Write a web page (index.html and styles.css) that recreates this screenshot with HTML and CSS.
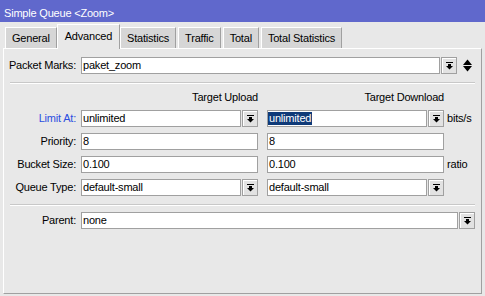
FILE: index.html
```html
<!DOCTYPE html>
<html>
<head>
<meta charset="utf-8">
<title>Simple Queue &lt;Zoom&gt;</title>
<link rel="stylesheet" href="styles.css">
</head>
<body>
<div class="window">
  <div class="titlebar">Simple Queue &lt;Zoom&gt;</div>
  <div class="tabs">
    <div class="tab">General</div>
    <div class="tab active">Advanced</div>
    <div class="tab">Statistics</div>
    <div class="tab">Traffic</div>
    <div class="tab">Total</div>
    <div class="tab">Total Statistics</div>
  </div>
  <div class="panel">
    <div class="row">
      <div class="lbl">Packet Marks:</div>
      <div class="combo combo-marks">
        <div class="field">paket_zoom</div>
        <div class="btn"><svg width="7" height="8" viewBox="0 0 7 8"><rect x="0" y="0" width="7" height="1"/><rect x="2" y="2" width="3" height="2"/><path d="M0 4h7L3.5 7.6z"/></svg></div>
      </div>
      <div class="updown"><svg width="9" height="13" viewBox="0 0 9 13"><path d="M4.5 0.5L9 6H0z"/><path d="M0 7h9L4.5 12.5z"/></svg></div>
    </div>
    <div class="sep"></div>
    <div class="grid">
      <div></div>
      <div class="colhead">Target Upload</div>
      <div class="colhead">Target Download</div>
      <div></div>

      <div class="lbl blue">Limit At:</div>
      <div class="combo">
        <div class="field">unlimited</div>
        <div class="btn"><svg width="7" height="8" viewBox="0 0 7 8"><rect x="0" y="0" width="7" height="1"/><rect x="2" y="2" width="3" height="2"/><path d="M0 4h7L3.5 7.6z"/></svg></div>
      </div>
      <div class="combo">
        <div class="field"><span class="sel">unlimited</span></div>
        <div class="btn"><svg width="7" height="8" viewBox="0 0 7 8"><rect x="0" y="0" width="7" height="1"/><rect x="2" y="2" width="3" height="2"/><path d="M0 4h7L3.5 7.6z"/></svg></div>
      </div>
      <div class="unit">bits/s</div>

      <div class="lbl">Priority:</div>
      <div class="field single">8</div>
      <div class="field single">8</div>
      <div></div>

      <div class="lbl">Bucket Size:</div>
      <div class="field single">0.100</div>
      <div class="field single">0.100</div>
      <div class="unit">ratio</div>

      <div class="lbl">Queue Type:</div>
      <div class="combo">
        <div class="field">default-small</div>
        <div class="btn"><svg width="7" height="8" viewBox="0 0 7 8"><rect x="0" y="0" width="7" height="1"/><rect x="2" y="2" width="3" height="2"/><path d="M0 4h7L3.5 7.6z"/></svg></div>
      </div>
      <div class="combo">
        <div class="field">default-small</div>
        <div class="btn"><svg width="7" height="8" viewBox="0 0 7 8"><rect x="0" y="0" width="7" height="1"/><rect x="2" y="2" width="3" height="2"/><path d="M0 4h7L3.5 7.6z"/></svg></div>
      </div>
      <div></div>
    </div>
    <div class="sep"></div>
    <div class="row row-parent">
      <div class="lbl">Parent:</div>
      <div class="combo combo-parent">
        <div class="field">none</div>
        <div class="btn"><svg width="7" height="8" viewBox="0 0 7 8"><rect x="0" y="0" width="7" height="1"/><rect x="2" y="2" width="3" height="2"/><path d="M0 4h7L3.5 7.6z"/></svg></div>
      </div>
    </div>
  </div>
</div>
</body>
</html>
```

FILE: styles.css
```css
* { box-sizing: border-box; }
html, body { margin: 0; padding: 0; }
body {
  width: 485px;
  height: 296px;
  overflow: hidden;
  background: #e8e8e8;
  font-family: "Liberation Sans", Arial, sans-serif;
  font-size: 11px;
  letter-spacing: -0.2px;
  color: #000;
}
.window { width: 485px; height: 296px; }

.titlebar {
  height: 22px;
  background: #6068cc;
  color: #fff;
  padding: 7px 0 0 4px;
  line-height: 13px;
  white-space: nowrap;
}

.tabs {
  display: flex;
  align-items: flex-end;
  height: 26px;
  padding-left: 5px;
  position: relative;
  z-index: 1;
}
.tab {
  height: 21px;
  padding: 4px 6px 0;
  line-height: 13px;
  white-space: nowrap;
  background: #d6d6d6;
  border-top: 1px solid #fff;
  border-left: 1px solid #fff;
  border-right: 1px solid #a0a0a0;
  margin-right: 2px;
}
.tab.active {
  height: 25px;
  margin-bottom: -1px;
  margin-left: -2px;
  margin-right: 0;
  padding: 5px 7px 0;
  background: #e8e8e8;
}

.panel {
  margin-left: 3px;
  width: 479px;
  height: 246px;
  border: 1px solid;
  border-color: #fff #a0a0a0 #a0a0a0 #fff;
  padding-top: 8px;
}

.row {
  display: flex;
  align-items: center;
  height: 17px;
}
.lbl {
  flex: none;
  width: 77px;
  padding-right: 5px;
  text-align: right;
  white-space: nowrap;
  line-height: 13px;
}
.lbl.blue { color: #2a4ee0; }

.combo {
  display: flex;
  width: 177px;
  height: 17px;
}
.combo-marks { width: 376px; }
.combo-parent { width: 394px; }

.field {
  flex: 1;
  height: 17px;
  background: #fff;
  border: 1px solid #a0a0a0;
  padding-left: 1px;
  line-height: 15px;
  white-space: nowrap;
  overflow: hidden;
}
.field.single { flex: none; width: 177px; }

.sel {
  display: inline-block;
  vertical-align: top;
  margin: 1px 0 0 -1px;
  padding: 0 1px;
  line-height: 13px;
  background: #0f3a78;
  color: #fff;
}

.btn {
  flex: none;
  width: 16px;
  height: 17px;
  margin-left: 1px;
  border: 1px solid #a0a0a0;
  background: #e2e2e2;
  box-shadow: inset 1px 1px #fff;
  display: flex;
  align-items: center;
  justify-content: center;
}
.btn svg, .updown svg { display: block; fill: #000; }

.updown {
  margin-left: 6px;
  width: 9px;
  height: 13px;
}

.sep {
  margin: 8px 6px 0;
  height: 2px;
  border-top: 1px solid #c8c8c8;
  border-bottom: 1px solid #fff;
}

.grid {
  display: grid;
  grid-template-columns: 77px 186px 180px auto;
  grid-template-rows: 20px repeat(4, 17px);
  row-gap: 6px;
  align-items: center;
}
.colhead {
  align-self: start;
  width: 177px;
  padding-top: 7px;
  line-height: 13px;
  text-align: right;
  white-space: nowrap;
}
.unit { line-height: 13px; white-space: nowrap; }

.row-parent { margin-top: 6px; }
```
